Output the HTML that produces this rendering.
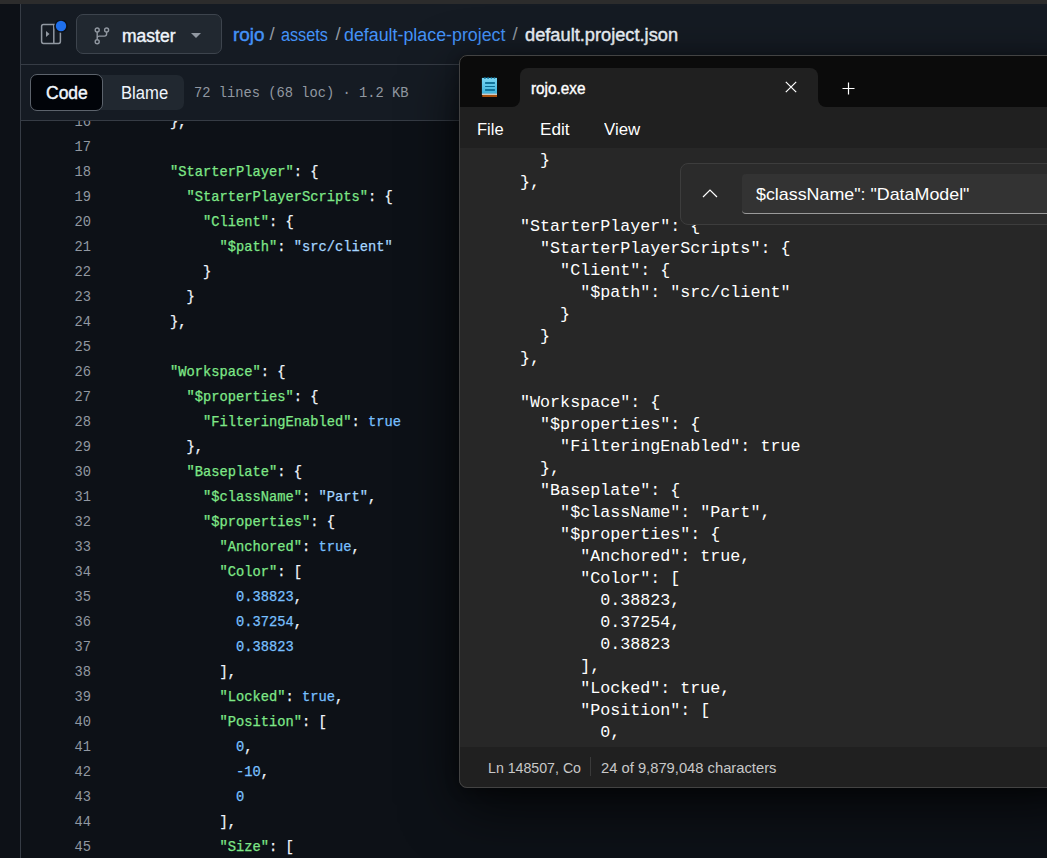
<!DOCTYPE html>
<html><head><meta charset="utf-8">
<style>
*{margin:0;padding:0;box-sizing:border-box}
html,body{width:1047px;height:858px;overflow:hidden;background:#0d1117;font-family:"Liberation Sans",sans-serif;position:relative}
.r{position:absolute}
.t{position:absolute;white-space:pre;line-height:1}
.k{color:#7ee787;-webkit-text-stroke:0.25px #7ee787}.s{color:#a5d6ff;-webkit-text-stroke:0.25px #a5d6ff}.c{color:#79c0ff;-webkit-text-stroke:0.25px #79c0ff}.gc{-webkit-text-stroke:0.25px #f0f6fc}
svg{position:absolute}
</style></head><body>
<div class="r" style="left:0px;top:0px;width:1047px;height:4px;background:#2c2c2c"></div>
<div class="r" style="left:0px;top:4px;width:20px;height:854px;background:#0d1117"></div>
<div class="r" style="left:21px;top:4px;width:1026px;height:117px;background:#151b23"></div>
<div class="r" style="left:20px;top:4px;width:1px;height:854px;background:#363c45"></div>
<div class="r" style="left:21px;top:64px;width:1026px;height:1px;background:#363c45"></div>
<div class="r" style="left:21px;top:120px;width:1026px;height:1px;background:#363c45"></div>
<div class="r" style="left:21px;top:121px;width:1026px;height:737px;background:#0d1117"></div>
<svg style="left:38px;top:20px" width="30" height="30" viewBox="0 0 30 30">
  <rect x="3.6" y="4.6" width="18.8" height="18.8" rx="1.8" fill="none" stroke="#9198a1" stroke-width="1.5"/>
  <line x1="15.8" y1="4.6" x2="15.8" y2="23.4" stroke="#9198a1" stroke-width="1.5"/>
  <path d="M8 11 L11.5 14 L8 17Z" fill="#9198a1"/>
  <circle cx="23" cy="6" r="6.8" fill="#0d1117"/>
  <circle cx="23" cy="6" r="5.2" fill="#1f6feb"/>
</svg>
<div class="r" style="left:76px;top:14px;width:146px;height:40px;border:1px solid #3d444d;background:#212830;border-radius:7px"></div>
<svg style="left:93px;top:27px" width="18" height="18" viewBox="0 0 18 18">
  <circle cx="4.2" cy="3" r="2" fill="none" stroke="#9198a1" stroke-width="1.4"/>
  <circle cx="4.2" cy="14.8" r="2" fill="none" stroke="#9198a1" stroke-width="1.4"/>
  <circle cx="13.6" cy="3" r="2" fill="none" stroke="#9198a1" stroke-width="1.4"/>
  <path d="M4.2 5 V12.8 M13.6 5 V7 Q13.6 9.1 11.5 9.1 H6.3 Q4.2 9.1 4.2 11.2" fill="none" stroke="#9198a1" stroke-width="1.4"/>
</svg>
<div class="t" style="left:122px;top:27.68px;font-size:17.5px;font-family:'Liberation Sans',sans-serif;color:#f0f6fc;font-weight:normal;-webkit-text-stroke:0.4px #f0f6fc;">master</div>
<svg style="left:190px;top:32px" width="12" height="7" viewBox="0 0 12 7"><path d="M1 1 H11 L6 6Z" fill="#9198a1"/></svg>
<div class="t" style="left:232.5px;top:25.76px;font-size:18px;font-family:'Liberation Sans',sans-serif;color:#4493f8;font-weight:normal;transform:scaleX(1.05);transform-origin:0 0;-webkit-text-stroke:0.4px #4493f8;">rojo</div>
<div class="t" style="left:269.5px;top:25.34px;font-size:18.5px;font-family:'Liberation Sans',sans-serif;color:#9198a1;font-weight:normal;">/</div>
<div class="t" style="left:281px;top:25.76px;font-size:18px;font-family:'Liberation Sans',sans-serif;color:#4493f8;font-weight:normal;transform:scaleX(0.9);transform-origin:0 0;">assets</div>
<div class="t" style="left:335.5px;top:25.34px;font-size:18.5px;font-family:'Liberation Sans',sans-serif;color:#9198a1;font-weight:normal;">/</div>
<div class="t" style="left:344px;top:25.76px;font-size:18px;font-family:'Liberation Sans',sans-serif;color:#4493f8;font-weight:normal;transform:scaleX(0.99);transform-origin:0 0;">default-place-project</div>
<div class="t" style="left:512.5px;top:25.34px;font-size:18.5px;font-family:'Liberation Sans',sans-serif;color:#9198a1;font-weight:normal;">/</div>
<div class="t" style="left:524.5px;top:25.76px;font-size:18px;font-family:'Liberation Sans',sans-serif;color:#f0f6fc;font-weight:normal;transform:scaleX(1.013);transform-origin:0 0;-webkit-text-stroke:0.4px #f0f6fc;">default.project.json</div>
<div class="r" style="left:30px;top:75px;width:154px;height:35px;background:#212830;border-radius:7px"></div>
<div class="r" style="left:30px;top:74px;width:73px;height:37px;background:#010409;border:1px solid #5c636c;border-radius:7px"></div>
<div class="t" style="left:46px;top:84.68px;font-size:17.5px;font-family:'Liberation Sans',sans-serif;color:#f0f6fc;font-weight:normal;-webkit-text-stroke:0.4px #f0f6fc;">Code</div>
<div class="t" style="left:121px;top:84.68px;font-size:17.5px;font-family:'Liberation Sans',sans-serif;color:#f0f6fc;font-weight:normal;transform:scaleX(0.95);transform-origin:0 0;">Blame</div>
<div class="t" style="left:194px;top:87.47px;font-size:13.75px;font-family:'Liberation Mono',monospace;color:#9198a1;font-weight:normal;">72 lines (68 loc) · 1.2 KB</div>
<div class="r" style="left:21px;top:121px;width:1026px;height:737px;overflow:hidden">
<div class="t" style="left:53.5px;top:-5.33px;font-size:13.75px;font-family:'Liberation Mono',monospace;color:#9198a1;font-weight:normal;">16</div>
<div class="t" style="left:116px;top:-4.93px;font-size:13.75px;font-family:'Liberation Mono',monospace;color:#f0f6fc;font-weight:normal;"><span class="gc">    },</span></div>
<div class="t" style="left:53.5px;top:19.67px;font-size:13.75px;font-family:'Liberation Mono',monospace;color:#9198a1;font-weight:normal;">17</div>
<div class="t" style="left:53.5px;top:44.67px;font-size:13.75px;font-family:'Liberation Mono',monospace;color:#9198a1;font-weight:normal;">18</div>
<div class="t" style="left:116px;top:45.07px;font-size:13.75px;font-family:'Liberation Mono',monospace;color:#f0f6fc;font-weight:normal;"><span class="gc">    <span class="k">"StarterPlayer"</span>: {</span></div>
<div class="t" style="left:53.5px;top:69.67px;font-size:13.75px;font-family:'Liberation Mono',monospace;color:#9198a1;font-weight:normal;">19</div>
<div class="t" style="left:116px;top:70.07px;font-size:13.75px;font-family:'Liberation Mono',monospace;color:#f0f6fc;font-weight:normal;"><span class="gc">      <span class="k">"StarterPlayerScripts"</span>: {</span></div>
<div class="t" style="left:53.5px;top:94.67px;font-size:13.75px;font-family:'Liberation Mono',monospace;color:#9198a1;font-weight:normal;">20</div>
<div class="t" style="left:116px;top:95.07px;font-size:13.75px;font-family:'Liberation Mono',monospace;color:#f0f6fc;font-weight:normal;"><span class="gc">        <span class="k">"Client"</span>: {</span></div>
<div class="t" style="left:53.5px;top:119.67px;font-size:13.75px;font-family:'Liberation Mono',monospace;color:#9198a1;font-weight:normal;">21</div>
<div class="t" style="left:116px;top:120.07px;font-size:13.75px;font-family:'Liberation Mono',monospace;color:#f0f6fc;font-weight:normal;"><span class="gc">          <span class="k">"$path"</span>: <span class="s">"src/client"</span></span></div>
<div class="t" style="left:53.5px;top:144.67px;font-size:13.75px;font-family:'Liberation Mono',monospace;color:#9198a1;font-weight:normal;">22</div>
<div class="t" style="left:116px;top:145.07px;font-size:13.75px;font-family:'Liberation Mono',monospace;color:#f0f6fc;font-weight:normal;"><span class="gc">        }</span></div>
<div class="t" style="left:53.5px;top:169.67px;font-size:13.75px;font-family:'Liberation Mono',monospace;color:#9198a1;font-weight:normal;">23</div>
<div class="t" style="left:116px;top:170.07px;font-size:13.75px;font-family:'Liberation Mono',monospace;color:#f0f6fc;font-weight:normal;"><span class="gc">      }</span></div>
<div class="t" style="left:53.5px;top:194.67px;font-size:13.75px;font-family:'Liberation Mono',monospace;color:#9198a1;font-weight:normal;">24</div>
<div class="t" style="left:116px;top:195.07px;font-size:13.75px;font-family:'Liberation Mono',monospace;color:#f0f6fc;font-weight:normal;"><span class="gc">    },</span></div>
<div class="t" style="left:53.5px;top:219.67px;font-size:13.75px;font-family:'Liberation Mono',monospace;color:#9198a1;font-weight:normal;">25</div>
<div class="t" style="left:53.5px;top:244.67px;font-size:13.75px;font-family:'Liberation Mono',monospace;color:#9198a1;font-weight:normal;">26</div>
<div class="t" style="left:116px;top:245.07px;font-size:13.75px;font-family:'Liberation Mono',monospace;color:#f0f6fc;font-weight:normal;"><span class="gc">    <span class="k">"Workspace"</span>: {</span></div>
<div class="t" style="left:53.5px;top:269.67px;font-size:13.75px;font-family:'Liberation Mono',monospace;color:#9198a1;font-weight:normal;">27</div>
<div class="t" style="left:116px;top:270.07px;font-size:13.75px;font-family:'Liberation Mono',monospace;color:#f0f6fc;font-weight:normal;"><span class="gc">      <span class="k">"$properties"</span>: {</span></div>
<div class="t" style="left:53.5px;top:294.67px;font-size:13.75px;font-family:'Liberation Mono',monospace;color:#9198a1;font-weight:normal;">28</div>
<div class="t" style="left:116px;top:295.07px;font-size:13.75px;font-family:'Liberation Mono',monospace;color:#f0f6fc;font-weight:normal;"><span class="gc">        <span class="k">"FilteringEnabled"</span>: <span class="c">true</span></span></div>
<div class="t" style="left:53.5px;top:319.67px;font-size:13.75px;font-family:'Liberation Mono',monospace;color:#9198a1;font-weight:normal;">29</div>
<div class="t" style="left:116px;top:320.07px;font-size:13.75px;font-family:'Liberation Mono',monospace;color:#f0f6fc;font-weight:normal;"><span class="gc">      },</span></div>
<div class="t" style="left:53.5px;top:344.67px;font-size:13.75px;font-family:'Liberation Mono',monospace;color:#9198a1;font-weight:normal;">30</div>
<div class="t" style="left:116px;top:345.07px;font-size:13.75px;font-family:'Liberation Mono',monospace;color:#f0f6fc;font-weight:normal;"><span class="gc">      <span class="k">"Baseplate"</span>: {</span></div>
<div class="t" style="left:53.5px;top:369.67px;font-size:13.75px;font-family:'Liberation Mono',monospace;color:#9198a1;font-weight:normal;">31</div>
<div class="t" style="left:116px;top:370.07px;font-size:13.75px;font-family:'Liberation Mono',monospace;color:#f0f6fc;font-weight:normal;"><span class="gc">        <span class="k">"$className"</span>: <span class="s">"Part"</span>,</span></div>
<div class="t" style="left:53.5px;top:394.67px;font-size:13.75px;font-family:'Liberation Mono',monospace;color:#9198a1;font-weight:normal;">32</div>
<div class="t" style="left:116px;top:395.07px;font-size:13.75px;font-family:'Liberation Mono',monospace;color:#f0f6fc;font-weight:normal;"><span class="gc">        <span class="k">"$properties"</span>: {</span></div>
<div class="t" style="left:53.5px;top:419.67px;font-size:13.75px;font-family:'Liberation Mono',monospace;color:#9198a1;font-weight:normal;">33</div>
<div class="t" style="left:116px;top:420.07px;font-size:13.75px;font-family:'Liberation Mono',monospace;color:#f0f6fc;font-weight:normal;"><span class="gc">          <span class="k">"Anchored"</span>: <span class="c">true</span>,</span></div>
<div class="t" style="left:53.5px;top:444.67px;font-size:13.75px;font-family:'Liberation Mono',monospace;color:#9198a1;font-weight:normal;">34</div>
<div class="t" style="left:116px;top:445.07px;font-size:13.75px;font-family:'Liberation Mono',monospace;color:#f0f6fc;font-weight:normal;"><span class="gc">          <span class="k">"Color"</span>: [</span></div>
<div class="t" style="left:53.5px;top:469.67px;font-size:13.75px;font-family:'Liberation Mono',monospace;color:#9198a1;font-weight:normal;">35</div>
<div class="t" style="left:116px;top:470.07px;font-size:13.75px;font-family:'Liberation Mono',monospace;color:#f0f6fc;font-weight:normal;"><span class="gc">            <span class="c">0.38823</span>,</span></div>
<div class="t" style="left:53.5px;top:494.67px;font-size:13.75px;font-family:'Liberation Mono',monospace;color:#9198a1;font-weight:normal;">36</div>
<div class="t" style="left:116px;top:495.07px;font-size:13.75px;font-family:'Liberation Mono',monospace;color:#f0f6fc;font-weight:normal;"><span class="gc">            <span class="c">0.37254</span>,</span></div>
<div class="t" style="left:53.5px;top:519.67px;font-size:13.75px;font-family:'Liberation Mono',monospace;color:#9198a1;font-weight:normal;">37</div>
<div class="t" style="left:116px;top:520.07px;font-size:13.75px;font-family:'Liberation Mono',monospace;color:#f0f6fc;font-weight:normal;"><span class="gc">            <span class="c">0.38823</span></span></div>
<div class="t" style="left:53.5px;top:544.67px;font-size:13.75px;font-family:'Liberation Mono',monospace;color:#9198a1;font-weight:normal;">38</div>
<div class="t" style="left:116px;top:545.07px;font-size:13.75px;font-family:'Liberation Mono',monospace;color:#f0f6fc;font-weight:normal;"><span class="gc">          ],</span></div>
<div class="t" style="left:53.5px;top:569.67px;font-size:13.75px;font-family:'Liberation Mono',monospace;color:#9198a1;font-weight:normal;">39</div>
<div class="t" style="left:116px;top:570.07px;font-size:13.75px;font-family:'Liberation Mono',monospace;color:#f0f6fc;font-weight:normal;"><span class="gc">          <span class="k">"Locked"</span>: <span class="c">true</span>,</span></div>
<div class="t" style="left:53.5px;top:594.67px;font-size:13.75px;font-family:'Liberation Mono',monospace;color:#9198a1;font-weight:normal;">40</div>
<div class="t" style="left:116px;top:595.07px;font-size:13.75px;font-family:'Liberation Mono',monospace;color:#f0f6fc;font-weight:normal;"><span class="gc">          <span class="k">"Position"</span>: [</span></div>
<div class="t" style="left:53.5px;top:619.67px;font-size:13.75px;font-family:'Liberation Mono',monospace;color:#9198a1;font-weight:normal;">41</div>
<div class="t" style="left:116px;top:620.07px;font-size:13.75px;font-family:'Liberation Mono',monospace;color:#f0f6fc;font-weight:normal;"><span class="gc">            <span class="c">0</span>,</span></div>
<div class="t" style="left:53.5px;top:644.67px;font-size:13.75px;font-family:'Liberation Mono',monospace;color:#9198a1;font-weight:normal;">42</div>
<div class="t" style="left:116px;top:645.07px;font-size:13.75px;font-family:'Liberation Mono',monospace;color:#f0f6fc;font-weight:normal;"><span class="gc">            <span class="c">-10</span>,</span></div>
<div class="t" style="left:53.5px;top:669.67px;font-size:13.75px;font-family:'Liberation Mono',monospace;color:#9198a1;font-weight:normal;">43</div>
<div class="t" style="left:116px;top:670.07px;font-size:13.75px;font-family:'Liberation Mono',monospace;color:#f0f6fc;font-weight:normal;"><span class="gc">            <span class="c">0</span></span></div>
<div class="t" style="left:53.5px;top:694.67px;font-size:13.75px;font-family:'Liberation Mono',monospace;color:#9198a1;font-weight:normal;">44</div>
<div class="t" style="left:116px;top:695.07px;font-size:13.75px;font-family:'Liberation Mono',monospace;color:#f0f6fc;font-weight:normal;"><span class="gc">          ],</span></div>
<div class="t" style="left:53.5px;top:719.67px;font-size:13.75px;font-family:'Liberation Mono',monospace;color:#9198a1;font-weight:normal;">45</div>
<div class="t" style="left:116px;top:720.07px;font-size:13.75px;font-family:'Liberation Mono',monospace;color:#f0f6fc;font-weight:normal;"><span class="gc">          <span class="k">"Size"</span>: [</span></div>
</div>
<div class="r" style="left:459px;top:55px;width:620px;height:733px;border-radius:8px;box-shadow:0 18px 56px rgba(0,0,0,.7), 0 2px 14px rgba(0,0,0,.3)"></div>
<div class="r" style="left:459px;top:55px;width:620px;height:733px;border-radius:8px;background:#202020;overflow:hidden">
<div class="r" style="left:0px;top:0px;width:620px;height:52px;background:#0b0b0b"></div>
<div class="r" style="left:61px;top:13px;width:298px;height:39px;background:#202020;border-radius:8px 8px 0 0"></div>
<div class="r" style="left:53px;top:44px;width:8px;height:8px;background:#202020"></div>
<div class="r" style="left:45px;top:36px;width:16px;height:16px;background:#0b0b0b;border-radius:0 0 8px 0"></div>
<div class="r" style="left:359px;top:44px;width:8px;height:8px;background:#202020"></div>
<div class="r" style="left:359px;top:36px;width:16px;height:16px;background:#0b0b0b;border-radius:0 0 0 8px"></div>
<div class="r" style="left:0px;top:52px;width:620px;height:41px;background:#202020"></div>
<div class="r" style="left:0px;top:93px;width:620px;height:599px;background:#272727"></div>
<div class="r" style="left:0px;top:692px;width:620px;height:41px;background:#202020"></div>
</div>
<div class="r" style="left:459px;top:55px;width:620px;height:733px;border-radius:8px;border:1px solid #434343"></div>
<svg style="left:476px;top:72px" width="28" height="30" viewBox="0 0 28 30">
  <defs><linearGradient id="nb" x1="0" y1="0" x2="0" y2="1"><stop offset="0" stop-color="#7ad6f4"/><stop offset="1" stop-color="#3fb2da"/></linearGradient></defs>
  <rect x="5.9" y="5.9" width="15.1" height="15.9" fill="url(#nb)"/>
  <rect x="5.9" y="21.6" width="15.1" height="1.3" fill="#e6f4f8"/>
  <rect x="6.3" y="22.9" width="14.7" height="2.1" fill="#a8500e"/>
  <rect x="9.1" y="10.1" width="9.8" height="1.8" fill="#0b6b92"/>
  <rect x="9.1" y="14.0" width="9.8" height="1.0" fill="#0b6b92"/>
  <rect x="9.1" y="17.1" width="9.8" height="1.8" fill="#0b6b92"/>
  <circle cx="8.9" cy="5.9" r="0.95" fill="#0b6b92"/><circle cx="12.1" cy="5.9" r="0.95" fill="#0b6b92"/>
  <circle cx="15.4" cy="5.9" r="0.8" fill="#0b6b92"/><circle cx="18.5" cy="5.9" r="0.8" fill="#0b6b92"/>
</svg>
<div class="t" style="left:530.5px;top:80.62px;font-size:15.8px;font-family:'Liberation Sans',sans-serif;color:#ffffff;font-weight:normal;transform:scaleX(0.97);transform-origin:0 0;-webkit-text-stroke:0.4px #ffffff;">rojo.exe</div>
<svg style="left:785px;top:81px" width="12" height="12" viewBox="0 0 12 12"><path d="M0.8 0.8 L11.2 11.2 M11.2 0.8 L0.8 11.2" stroke="#ffffff" stroke-width="1.2"/></svg>
<svg style="left:842px;top:82px" width="13" height="13" viewBox="0 0 13 13"><path d="M6.5 0.5 V12.5 M0.5 6.5 H12.5" stroke="#ffffff" stroke-width="1.2"/></svg>
<div class="t" style="left:477px;top:120.73px;font-size:16.5px;font-family:'Liberation Sans',sans-serif;color:#ffffff;font-weight:normal;">File</div>
<div class="t" style="left:540px;top:120.73px;font-size:16.5px;font-family:'Liberation Sans',sans-serif;color:#ffffff;font-weight:normal;transform:scaleX(1.04);transform-origin:0 0;">Edit</div>
<div class="t" style="left:604px;top:120.73px;font-size:16.5px;font-family:'Liberation Sans',sans-serif;color:#ffffff;font-weight:normal;transform:scaleX(1.02);transform-origin:0 0;">View</div>
<div class="r" style="left:459px;top:148px;width:588px;height:599px;overflow:hidden">
<div class="t" style="left:21px;top:4.71px;font-size:16.7px;font-family:'Liberation Mono',monospace;color:#ffffff;font-weight:normal;">      }</div>
<div class="t" style="left:21px;top:26.71px;font-size:16.7px;font-family:'Liberation Mono',monospace;color:#ffffff;font-weight:normal;">    },</div>
<div class="t" style="left:21px;top:70.71px;font-size:16.7px;font-family:'Liberation Mono',monospace;color:#ffffff;font-weight:normal;">    &quot;StarterPlayer&quot;: {</div>
<div class="t" style="left:21px;top:92.71px;font-size:16.7px;font-family:'Liberation Mono',monospace;color:#ffffff;font-weight:normal;">      &quot;StarterPlayerScripts&quot;: {</div>
<div class="t" style="left:21px;top:114.71px;font-size:16.7px;font-family:'Liberation Mono',monospace;color:#ffffff;font-weight:normal;">        &quot;Client&quot;: {</div>
<div class="t" style="left:21px;top:136.71px;font-size:16.7px;font-family:'Liberation Mono',monospace;color:#ffffff;font-weight:normal;">          &quot;$path&quot;: &quot;src/client&quot;</div>
<div class="t" style="left:21px;top:158.71px;font-size:16.7px;font-family:'Liberation Mono',monospace;color:#ffffff;font-weight:normal;">        }</div>
<div class="t" style="left:21px;top:180.71px;font-size:16.7px;font-family:'Liberation Mono',monospace;color:#ffffff;font-weight:normal;">      }</div>
<div class="t" style="left:21px;top:202.71px;font-size:16.7px;font-family:'Liberation Mono',monospace;color:#ffffff;font-weight:normal;">    },</div>
<div class="t" style="left:21px;top:246.71px;font-size:16.7px;font-family:'Liberation Mono',monospace;color:#ffffff;font-weight:normal;">    &quot;Workspace&quot;: {</div>
<div class="t" style="left:21px;top:268.71px;font-size:16.7px;font-family:'Liberation Mono',monospace;color:#ffffff;font-weight:normal;">      &quot;$properties&quot;: {</div>
<div class="t" style="left:21px;top:290.71px;font-size:16.7px;font-family:'Liberation Mono',monospace;color:#ffffff;font-weight:normal;">        &quot;FilteringEnabled&quot;: true</div>
<div class="t" style="left:21px;top:312.71px;font-size:16.7px;font-family:'Liberation Mono',monospace;color:#ffffff;font-weight:normal;">      },</div>
<div class="t" style="left:21px;top:334.71px;font-size:16.7px;font-family:'Liberation Mono',monospace;color:#ffffff;font-weight:normal;">      &quot;Baseplate&quot;: {</div>
<div class="t" style="left:21px;top:356.71px;font-size:16.7px;font-family:'Liberation Mono',monospace;color:#ffffff;font-weight:normal;">        &quot;$className&quot;: &quot;Part&quot;,</div>
<div class="t" style="left:21px;top:378.71px;font-size:16.7px;font-family:'Liberation Mono',monospace;color:#ffffff;font-weight:normal;">        &quot;$properties&quot;: {</div>
<div class="t" style="left:21px;top:400.71px;font-size:16.7px;font-family:'Liberation Mono',monospace;color:#ffffff;font-weight:normal;">          &quot;Anchored&quot;: true,</div>
<div class="t" style="left:21px;top:422.71px;font-size:16.7px;font-family:'Liberation Mono',monospace;color:#ffffff;font-weight:normal;">          &quot;Color&quot;: [</div>
<div class="t" style="left:21px;top:444.71px;font-size:16.7px;font-family:'Liberation Mono',monospace;color:#ffffff;font-weight:normal;">            0.38823,</div>
<div class="t" style="left:21px;top:466.71px;font-size:16.7px;font-family:'Liberation Mono',monospace;color:#ffffff;font-weight:normal;">            0.37254,</div>
<div class="t" style="left:21px;top:488.71px;font-size:16.7px;font-family:'Liberation Mono',monospace;color:#ffffff;font-weight:normal;">            0.38823</div>
<div class="t" style="left:21px;top:510.71px;font-size:16.7px;font-family:'Liberation Mono',monospace;color:#ffffff;font-weight:normal;">          ],</div>
<div class="t" style="left:21px;top:532.71px;font-size:16.7px;font-family:'Liberation Mono',monospace;color:#ffffff;font-weight:normal;">          &quot;Locked&quot;: true,</div>
<div class="t" style="left:21px;top:554.71px;font-size:16.7px;font-family:'Liberation Mono',monospace;color:#ffffff;font-weight:normal;">          &quot;Position&quot;: [</div>
<div class="t" style="left:21px;top:576.71px;font-size:16.7px;font-family:'Liberation Mono',monospace;color:#ffffff;font-weight:normal;">            0,</div>
</div>
<div class="r" style="left:680px;top:163px;width:420px;height:62px;background:#2b2b2b;border:1px solid #3d3d3d;border-radius:8px"></div>
<svg style="left:702px;top:188px" width="16" height="10" viewBox="0 0 16 10"><path d="M1 9 L8 2 L15 9" fill="none" stroke="#ffffff" stroke-width="1.2"/></svg>
<div class="r" style="left:742px;top:174px;width:400px;height:40px;background:#333333;border-radius:4px;border-bottom:1px solid #9a9a9a"></div>
<div class="t" style="left:756px;top:185.61px;font-size:17px;font-family:'Liberation Sans',sans-serif;color:#ffffff;font-weight:normal;transform:scaleX(1.05);transform-origin:0 0;">$className&quot;: &quot;DataModel&quot;</div>
<div class="t" style="left:488px;top:760.20px;font-size:15px;font-family:'Liberation Sans',sans-serif;color:#c8c8c8;font-weight:normal;transform:scaleX(0.945);transform-origin:0 0;">Ln 148507, Co</div>
<div class="r" style="left:590px;top:757px;width:1px;height:19px;background:#3a3a3a"></div>
<div class="t" style="left:601px;top:760.20px;font-size:15px;font-family:'Liberation Sans',sans-serif;color:#c8c8c8;font-weight:normal;transform:scaleX(0.983);transform-origin:0 0;">24 of 9,879,048 characters</div>
</body></html>
